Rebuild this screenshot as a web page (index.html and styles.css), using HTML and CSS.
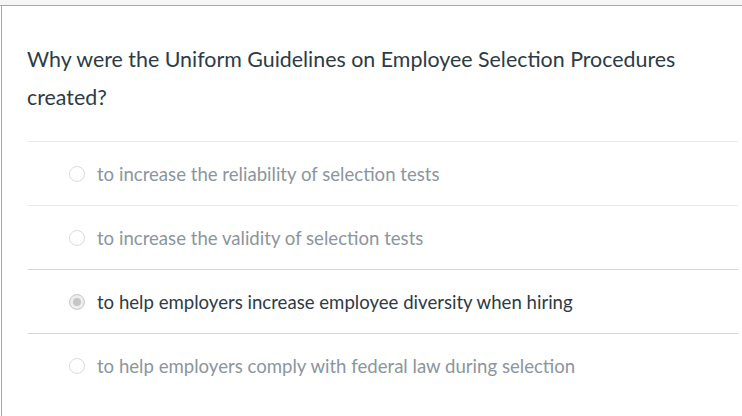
FILE: index.html
```html
<!DOCTYPE html>
<html>
<head>
<meta charset="utf-8">
<link rel="stylesheet" href="styles.css">
</head>
<body>
<div class="topbar"></div>
<div class="panel">
  <div class="question">Why were the Uniform Guidelines on Employee Selection Procedures created?</div>
  <div class="answers">
    <div class="answer">
      <span class="radio"></span>
      <span class="label">to increase the reliability of selection tests</span>
    </div>
    <div class="answer">
      <span class="radio"></span>
      <span class="label">to increase the validity of selection tests</span>
    </div>
    <div class="answer selected">
      <span class="radio"></span>
      <span class="label">to help employers increase employee diversity when hiring</span>
    </div>
    <div class="answer after-selected">
      <span class="radio"></span>
      <span class="label">to help employers comply with federal law during selection</span>
    </div>
  </div>
</div>
</body>
</html>
```

FILE: styles.css
```css
html, body {
  margin: 0;
  padding: 0;
  background: #ffffff;
  font-family: Lato, "Open Sans", sans-serif;
}
.topbar {
  height: 5px;
  background: #f5f5f5;
  border-bottom: 1px solid #a8a8a8;
}
.panel {
  margin-left: 1px;
  border-left: 1px solid #a8a8a8;
  height: 410px;
  box-sizing: border-box;
}
.question {
  padding: 34px 30px 0 25px;
  font-size: 21.4px;
  line-height: 38px;
  color: #2d3b45;
}
.answers {
  margin: 25px 4px 0 26px;
}
.answer {
  display: flex;
  align-items: center;
  height: 63px;
  border-top: 1px solid #e8eaec;
  padding-left: 41px;
}
.radio {
  width: 14px;
  height: 14px;
  border: 1px solid #dcdcdc;
  border-radius: 50%;
  background: #fff;
  flex: none;
  margin-right: 12px;
}
.label {
  font-size: 18.6px;
  color: #8b959e;
}
.selected {
  border-top-color: #d4d4d4;
}
.after-selected {
  border-top-color: #d4d4d4;
}
.selected .label {
  color: #2d3b45;
}
.selected .radio {
  box-sizing: border-box;
  width: 16px;
  height: 16px;
  border: 1px solid #cfcfcf;
  background: #c6c6c6;
  box-shadow: inset 0 0 0 3px #eeeeee;
}
```
